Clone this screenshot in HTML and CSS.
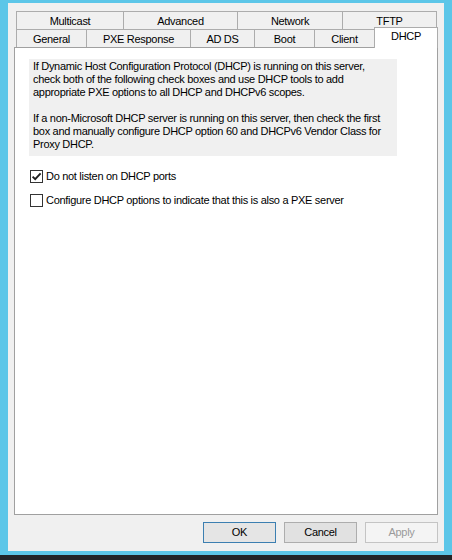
FILE: index.html
```html
<!DOCTYPE html>
<html>
<head>
<meta charset="utf-8">
<link rel="stylesheet" href="styles.css">
</head>
<body>
<div class="window">
  <div class="tabs">
    <div class="tabrow">
      <div class="tab w-multicast">Multicast</div>
      <div class="tab w-advanced">Advanced</div>
      <div class="tab w-network">Network</div>
      <div class="tab w-tftp">TFTP</div>
    </div>
    <div class="tabrow front">
      <div class="tab w-general">General</div>
      <div class="tab w-pxe">PXE Response</div>
      <div class="tab w-adds">AD DS</div>
      <div class="tab w-boot">Boot</div>
      <div class="tab w-client">Client</div>
      <div class="tab w-dhcp selected">DHCP</div>
    </div>
  </div>
  <div class="panel">
    <div class="info">
      <p>If Dynamic Host Configuration Protocol (DHCP) is running on this server,<br>check both of the following check boxes and use DHCP tools to add<br>appropriate PXE options to all DHCP and DHCPv6 scopes.</p>
      <p>If a non-Microsoft DHCP server is running on this server, then check the first<br>box and manually configure DHCP option 60 and DHCPv6 Vendor Class for<br>Proxy DHCP.</p>
    </div>
    <div class="checks">
      <div class="check">
        <span class="box"><svg width="11" height="11" viewBox="0 0 11 11"><polyline points="1.6,5.6 4.2,8.2 9.6,2.4" fill="none" stroke="#1e1e1e" stroke-width="1.9"/></svg></span>
        <span class="label">Do not listen on DHCP ports</span>
      </div>
      <div class="check">
        <span class="box"></span>
        <span class="label">Configure DHCP options to indicate that this is also a PXE server</span>
      </div>
    </div>
  </div>
  <div class="buttons">
    <div class="btn default">OK</div>
    <div class="btn">Cancel</div>
    <div class="btn disabled">Apply</div>
  </div>
</div>
<div class="gap"></div>
<div class="taskbar"></div>
</body>
</html>
```
FILE: styles.css
```css
html, body {
  margin: 0;
  padding: 0;
}
body {
  width: 452px;
  height: 560px;
  background: #5cc6e8;
  padding-top: 3px;
  box-sizing: border-box;
  font-family: "Liberation Sans", Arial, sans-serif;
  font-size: 11px;
  letter-spacing: -0.3px;
  color: #000;
  overflow: hidden;
}
.window {
  margin: 0 8px;
  height: 548px;
  box-sizing: border-box;
  background: #f0f0f0;
  padding: 8px 6px;
}
.tabs {
  padding-left: 2px;
}
.tabrow {
  display: flex;
  height: 18px;
  align-items: flex-end;
}
.tab {
  box-sizing: border-box;
  height: 18px;
  border: 1px solid #acacac;
  border-bottom: none;
  background: #f0f0f0;
  text-align: center;
  line-height: 17px;
  margin-left: -1px;
  white-space: nowrap;
}
.tab:first-child {
  margin-left: 0;
}
.tabrow:first-child .tab {
  height: 19px;
  margin-bottom: -1px;
  line-height: 18px;
}
.front .tab {
  position: relative;
  line-height: 18px;
}
.tab.selected {
  background: #fff;
  height: 21px;
  margin-bottom: -1px;
  z-index: 1;
  line-height: 17px;
}
.w-multicast { width: 108px; }
.w-advanced { width: 115px; }
.w-network { width: 106px; }
.w-tftp { width: 95px; }
.w-general { width: 71px; }
.w-pxe { width: 105px; }
.w-adds { width: 65px; }
.w-boot { width: 61px; }
.w-client { width: 61px; }
.w-dhcp { width: 64px; }

.panel {
  box-sizing: border-box;
  height: 468px;
  background: #fff;
  border: 1px solid #a0a0a0;
  padding: 11px 14px 0 14px;
}
.info {
  width: 368px;
  box-sizing: border-box;
  background: #f0f0f0;
  padding: 1px 4px 5px 4px;
  line-height: 13px;
  white-space: nowrap;
}
.info p {
  margin: 0;
}
.info p + p {
  margin-top: 13px;
}
.checks {
  margin-top: 14px;
  padding-left: 1px;
  display: flex;
  flex-direction: column;
  gap: 11px;
}
.check {
  display: flex;
  align-items: center;
  height: 13px;
}
.box {
  box-sizing: border-box;
  width: 13px;
  height: 13px;
  border: 1px solid #333;
  background: #fff;
  display: flex;
  align-items: center;
  justify-content: center;
}
.label {
  margin-left: 3px;
  line-height: 13px;
}
.buttons {
  margin-top: 7px;
  display: flex;
  justify-content: flex-end;
  gap: 8px;
}
.btn {
  box-sizing: border-box;
  width: 73px;
  height: 21px;
  border: 1px solid #adadad;
  background: #e1e1e1;
  text-align: center;
  line-height: 19px;
}
.btn.default {
  border-color: #3c7fb1;
  background: #e5e5e5;
}
.btn.disabled {
  border-color: #c4c4c4;
  background: #f4f4f4;
  color: #9a9a9a;
}
.gap {
  height: 4px;
}
.taskbar {
  height: 5px;
  background: #222428;
}
```
